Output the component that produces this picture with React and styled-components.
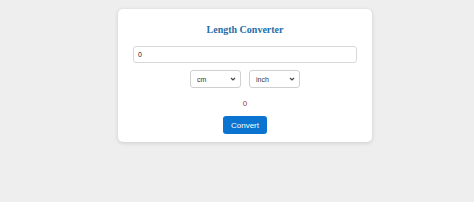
import React, { useState } from "react";
import styled, { createGlobalStyle } from "styled-components";

const GlobalStyle = createGlobalStyle`
  html, body {
    margin: 0;
    padding: 0;
    background: #eeeeee;
  }
  body {
    font-family: "Liberation Sans", Arial, sans-serif;
  }
`

const Page = styled.div`
  width: 474px;
  height: 202px;
  display: flex;
  justify-content: center;
  align-items: flex-start;
  padding: 9px 0 0 16px;
  box-sizing: border-box;
`

const Card = styled.div`
  width: 254px;
  height: 133px;
  box-sizing: border-box;
  background: #ffffff;
  border-radius: 5px;
  box-shadow: 0 1px 4px rgba(0, 0, 0, 0.15);
  padding: 14px 15px 0;
  display: flex;
  flex-direction: column;
  align-items: center;
`

const Title = styled.h2`
  margin: 0;
  font-family: "Liberation Serif", "Times New Roman", serif;
  font-weight: bold;
  font-size: 10px;
  line-height: 13px;
  color: #276ea6;
`

const ValueInput = styled.input`
  margin-top: 10px;
  width: 224px;
  height: 17px;
  box-sizing: border-box;
  border: 1px solid #d8d8d8;
  border-radius: 3px;
  padding: 0 4px;
  font-family: "Liberation Sans", Arial, sans-serif;
  font-size: 7px;
  color: #222;
  outline: none;
`

const SelectRow = styled.div`
  margin-top: 7px;
  display: flex;
  gap: 8px;
`

const UnitSelect = styled.select`
  appearance: none;
  -webkit-appearance: none;
  width: 51px;
  height: 18px;
  box-sizing: border-box;
  border: 1px solid #cfcfcf;
  border-radius: 3px;
  padding: 0 6px;
  font-family: "Liberation Sans", Arial, sans-serif;
  font-size: 7px;
  color: #333;
  background-color: #fff;
  background-image: url("data:image/svg+xml;utf8,<svg xmlns='http://www.w3.org/2000/svg' width='6' height='4' viewBox='0 0 6 4'><path d='M1 1l2 2 2-2' fill='none' stroke='%23444' stroke-width='1.2'/></svg>");
  background-repeat: no-repeat;
  background-position: right 4px center;
`

const Result = styled.div`
  margin-top: 11px;
  font-size: 8px;
  line-height: 10px;
  color: #9a3b30;
`

const ConvertButton = styled.button`
  margin-top: 7px;
  width: 44px;
  height: 18px;
  border: none;
  border-radius: 3px;
  background: #0a74d0;
  color: #fff;
  font-family: "Liberation Sans", Arial, sans-serif;
  font-size: 8px;
  padding: 0;
  cursor: pointer;
`

const factors = { cm: 1, inch: 2.54, m: 100, mm: 0.1 }

export default function App() {
  const [value, setValue] = useState("0")
  const [from, setFrom] = useState("cm")
  const [to, setTo] = useState("inch")
  const [result, setResult] = useState("0")

  const handleConvert = () => {
    const n = parseFloat(value) || 0
    setResult(String(+(n * factors[from] / factors[to]).toFixed(4)))
  }

  return (
    <>
      <GlobalStyle />
      <Page>
        <Card>
          <Title>Length Converter</Title>
          <ValueInput value={value} onChange={e => setValue(e.target.value)} />
          <SelectRow>
            <UnitSelect value={from} onChange={e => setFrom(e.target.value)}>
              <option value="cm">cm</option>
              <option value="inch">inch</option>
              <option value="m">m</option>
              <option value="mm">mm</option>
            </UnitSelect>
            <UnitSelect value={to} onChange={e => setTo(e.target.value)}>
              <option value="cm">cm</option>
              <option value="inch">inch</option>
              <option value="m">m</option>
              <option value="mm">mm</option>
            </UnitSelect>
          </SelectRow>
          <Result>{result}</Result>
          <ConvertButton onClick={handleConvert}>Convert</ConvertButton>
        </Card>
      </Page>
    </>
  )
}
